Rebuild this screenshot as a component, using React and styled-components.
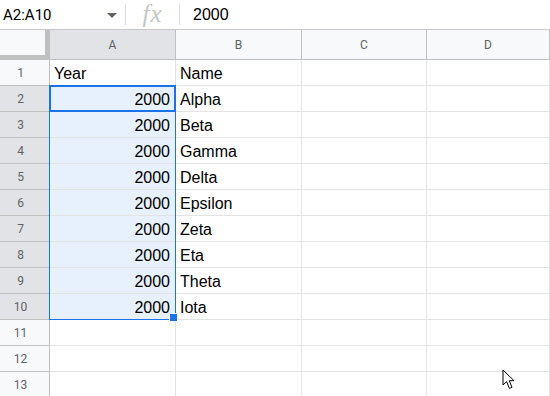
import React from 'react';
import styled, { createGlobalStyle } from 'styled-components';

const GlobalStyle = createGlobalStyle`
  html, body {
    margin: 0;
    padding: 0;
    background: #ffffff;
  }
`;

const names = ['Alpha', 'Beta', 'Gamma', 'Delta', 'Epsilon', 'Zeta', 'Eta', 'Theta', 'Iota'];
const columns = ['A', 'B', 'C', 'D'];
const TOTAL_ROWS = 13;

const App = () => {
  const rows = [];
  for (let r = 1; r <= TOTAL_ROWS; r += 1) {
    const inSel = r >= 2 && r <= 10;
    rows.push(
      <React.Fragment key={r}>
        <RowHeader $selected={inSel}>{r}</RowHeader>
        <Cell $selected={inSel} $align={r === 1 ? 'left' : 'right'}>
          {r === 1 ? 'Year' : null}
          {inSel ? '2000' : null}
        </Cell>
        <Cell>{r === 1 ? 'Name' : names[r - 2] || null}</Cell>
        <Cell />
        <Cell />
      </React.Fragment>,
    );
  }

  return (
    <Page>
      <GlobalStyle />
      <FormulaBar>
        <NameBox>
          <span>A2:A10</span>
          <DropArrow />
        </NameBox>
        <Divider />
        <FxLabel>fx</FxLabel>
        <Divider />
        <FormulaText>2000</FormulaText>
      </FormulaBar>
      <Sheet>
        <Corner />
        {columns.map((c) => (
          <ColHeader key={c} $selected={c === 'A'}>{c}</ColHeader>
        ))}
        {rows}
        <RangeBorder />
        <ActiveBorder />
        <FillHandle />
      </Sheet>
      <Pointer viewBox="0 0 14 22" width="14" height="22">
        <path
          d="M1 1 L1 16 L4.6 12.6 L7.4 19.4 L10 18.3 L7.3 11.7 L12 11.7 Z"
          fill="#ffffff"
          stroke="#000000"
          strokeWidth="1"
          strokeLinejoin="miter"
        />
      </Pointer>
    </Page>
  );
};

const Page = styled.div`
  position: relative;
  width: 550px;
  height: 396px;
  overflow: hidden;
  background: #ffffff;
  font-family: Roboto, "Liberation Sans", Arial, sans-serif;
`;

const FormulaBar = styled.div`
  display: flex;
  align-items: center;
  height: 29px;
  border-bottom: 1px solid #c7c7c7;
  color: #000000;
`;

const NameBox = styled.div`
  display: flex;
  align-items: center;
  justify-content: space-between;
  width: 114px;
  padding: 0 8px 0 3px;
  font-size: 15px;
`;

const DropArrow = styled.span`
  width: 0;
  height: 0;
  margin-top: 2px;
  border-left: 5px solid transparent;
  border-right: 5px solid transparent;
  border-top: 5px solid #5f6368;
`;

const Divider = styled.div`
  width: 1px;
  height: 21px;
  background: #dadce0;
`;

const FxLabel = styled.div`
  width: 53px;
  text-align: center;
  font-family: "Liberation Serif", "DejaVu Serif", serif;
  font-style: italic;
  font-size: 25px;
  color: #c4c7c5;
  letter-spacing: 1px;
  line-height: 1;
  padding-bottom: 2px;
`;

const FormulaText = styled.div`
  padding-left: 13px;
  font-size: 16px;
  font-family: "Liberation Sans", Arial, sans-serif;
`;

const Sheet = styled.div`
  position: relative;
  display: grid;
  grid-template-columns: 50px 126px 126px 125px 123px;
  grid-template-rows: 30px;
  grid-auto-rows: 26px;
`;

const Corner = styled.div`
  box-sizing: border-box;
  background: #f8f9fa;
  border-right: 5px solid #c0c0c0;
  border-bottom: 5px solid #c0c0c0;
`;

const ColHeader = styled.div`
  box-sizing: border-box;
  display: flex;
  align-items: center;
  justify-content: center;
  background: ${(p) => (p.$selected ? '#e1e3e7' : '#f8f9fa')};
  border-right: 1px solid #c0c0c0;
  border-bottom: 1px solid #c0c0c0;
  color: #5f6368;
  font-size: 12px;
`;

const RowHeader = styled.div`
  box-sizing: border-box;
  display: flex;
  align-items: center;
  justify-content: center;
  padding-right: 8px;
  background: ${(p) => (p.$selected ? '#e1e3e7' : '#f8f9fa')};
  border-right: 1px solid #c0c0c0;
  border-bottom: 1px solid #c0c0c0;
  color: #5f6368;
  font-size: 12px;
`;

const Cell = styled.div`
  box-sizing: border-box;
  display: flex;
  align-items: center;
  justify-content: ${(p) => (p.$align === 'right' ? 'flex-end' : 'flex-start')};
  padding: 3px 5px 0 4px;
  background: ${(p) => (p.$selected ? '#e7f0fd' : '#ffffff')};
  border-right: 1px solid #e2e3e3;
  border-bottom: 1px solid #e2e3e3;
  font-family: "Liberation Sans", Arial, sans-serif;
  font-size: 16px;
  color: #000000;
  white-space: nowrap;
`;

const RangeBorder = styled.div`
  position: absolute;
  left: 49px;
  top: 55px;
  width: 125px;
  height: 233px;
  border: 1px solid #1a73e8;
  pointer-events: none;
`;

const ActiveBorder = styled.div`
  position: absolute;
  left: 49px;
  top: 55px;
  width: 123px;
  height: 23px;
  border: 2px solid #1a73e8;
  pointer-events: none;
`;

const FillHandle = styled.div`
  position: absolute;
  left: 169px;
  top: 283px;
  width: 7px;
  height: 7px;
  background: #1a73e8;
  border: 1px solid #ffffff;
`;

const Pointer = styled.svg`
  position: absolute;
  left: 502px;
  top: 369px;
`;

export default App;
